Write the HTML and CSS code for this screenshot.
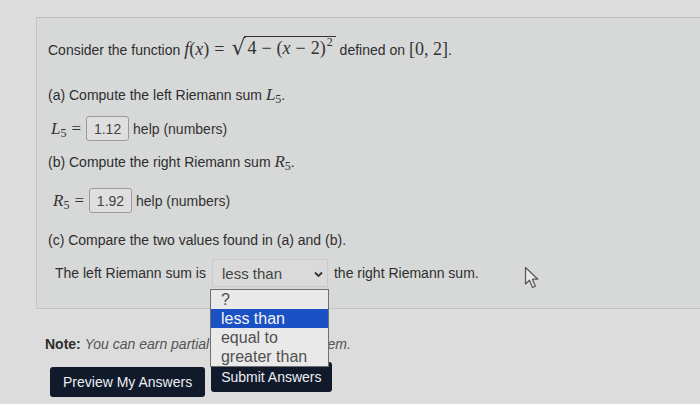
FILE: index.html
```html
<!DOCTYPE html>
<html>
<head>
<meta charset="utf-8">
<link rel="stylesheet" href="styles.css">
</head>
<body>
<div class="page">
  <div class="panel">
    <p class="row r1">Consider the function <span class="m big"><i>f</i>(<i>x</i>)<span class="op">=</span><span class="sqrt"><span class="rad">√</span><span class="under">4<span class="op">−</span>(<i>x</i><span class="op">−</span>2)<sup>2</sup></span></span></span> defined on <span class="m big">[0, 2]</span>.</p>
    <p class="row ra">(a) Compute the left Riemann sum <span class="m"><i>L</i><sub>5</sub></span>.</p>
    <div class="row ans a1"><span class="m"><i>L</i><sub>5</sub><span class="op">=</span></span><span class="box">1.12</span><span class="help">help (numbers)</span></div>
    <p class="row rb">(b) Compute the right Riemann sum <span class="m"><i>R</i><sub>5</sub></span>.</p>
    <div class="row ans a2"><span class="m"><i>R</i><sub>5</sub><span class="op">=</span></span><span class="box">1.92</span><span class="help">help (numbers)</span></div>
    <p class="row rc">(c) Compare the two values found in (a) and (b).</p>
    <div class="row cmp">
      <span>The left Riemann sum is</span>
      <div class="select">
        <span>less than</span>
        <svg class="chev" width="9" height="7" viewBox="0 0 9 7"><path d="M1 1.5 L4.5 5 L8 1.5" fill="none" stroke="#333" stroke-width="1.8"/></svg>
        <ul class="list">
          <li>?</li>
          <li class="sel">less than</li>
          <li>equal to</li>
          <li>greater than</li>
        </ul>
      </div>
      <span>the right Riemann sum.</span>
    </div>
  </div>
  <p class="note"><b>Note:</b> <i>You can earn partial credit on this problem.</i></p>
  <div class="buttons">
    <button class="btn">Preview My Answers</button>
    <button class="btn submit">Submit Answers</button>
  </div>
</div>
<svg class="cursor" width="16" height="24" viewBox="0 0 16 24"><path d="M1.5 1.5 L1.5 18 L5.5 14.2 L8.6 21.5 L11.4 20.3 L8.4 13.2 L13.8 13.2 Z" fill="#e8e8e8" stroke="#555" stroke-width="1.2" stroke-linejoin="round"/></svg>
</body>
</html>
```

FILE: styles.css
```css
html, body {
  margin: 0;
  padding: 0;
}
body {
  background: #dcdcdc;
  font-family: "Liberation Sans", Arial, sans-serif;
  font-size: 14px;
  color: #2e2e2e;
  width: 700px;
  height: 404px;
  overflow: hidden;
  position: relative;
}
.page {
  padding: 17px 0 0 36px;
}
.panel {
  background: #d7d8d8;
  border-top: 1px solid #bcbcbc;
  border-left: 1px solid #c6c6c6;
  border-bottom: 1px solid #c2c2c2;
  padding: 18px 0 20px 11px;
}
.row {
  margin: 0;
  display: flex;
  align-items: center;
  height: 24px;
  white-space: pre;
}
p.row {
  display: block;
  line-height: 24px;
}
.ra { margin-top: 23px; }
.a1 { margin-top: 9px; height: 25px; padding-left: 3px; }
.rb { margin-top: 9px; }
.a2 { margin-top: 14px; height: 25px; padding-left: 5px; }
.rc { margin-top: 15px; }
.cmp { margin-top: 6px; height: 30px; padding-left: 7px; }

.m {
  font-family: "Liberation Serif", "DejaVu Serif", serif;
  font-size: 17px;
  color: #333;
}
.m.big {
  font-size: 18px;
}
.op {
  margin: 0 5px;
}
.m sub {
  font-size: 12px;
  vertical-align: -3px;
  line-height: 0;
}
.m sup {
  font-size: 12px;
  vertical-align: 8px;
  line-height: 0;
  margin-left: 1px;
}
.sqrt {
  display: inline-flex;
  align-items: flex-end;
  margin-left: 2px;
}
.rad {
  font-size: 22px;
  line-height: 21px;
  font-family: "DejaVu Serif", serif;
  margin-right: -1px;
}
.under {
  border-top: 1px solid #333;
  padding: 2px 3px 0 3px;
  line-height: 19px;
}
.box {
  display: inline-flex;
  align-items: center;
  justify-content: center;
  width: 41px;
  height: 23px;
  border: 1px solid #9a9a9a;
  border-radius: 3px;
  background: #dfdfdf;
  margin-left: 0;
  margin-right: 4px;
  font-size: 14px;
  color: #444;
}
.help { color: #333; }

.select {
  position: relative;
  display: flex;
  align-items: center;
  width: 116px;
  height: 28px;
  border: 1px solid #cacaca;
  background: #dadada;
  margin: 0 6px 0 6px;
  padding-left: 9px;
  box-sizing: border-box;
  font-size: 15px;
  color: #444;
}
.chev {
  position: absolute;
  right: 4px;
  top: 11px;
}
.list {
  position: absolute;
  left: -3px;
  top: 29px;
  width: 119px;
  margin: 0;
  padding: 0;
  list-style: none;
  white-space: normal;
  background: #e9e9e9;
  border: 1px solid #707070;
  box-sizing: border-box;
  z-index: 5;
  font-size: 16px;
  color: #505050;
}
.list li {
  height: 19px;
  line-height: 19px;
  padding-left: 10px;
  white-space: nowrap;
}
.list li.sel {
  background: #1a52c6;
  color: #f4f4f4;
}

.note {
  margin: 26px 0 0 9px;
  line-height: 18px;
  font-size: 14px;
  color: #2c2c2c;
}
.note b { font-weight: bold; }
.note i { color: #555; }

.buttons {
  display: flex;
  align-items: flex-start;
  gap: 6px;
  margin: 14px 0 0 14px;
}
.btn {
  font-family: "Liberation Sans", Arial, sans-serif;
  font-size: 14px;
  color: #eceef2;
  background: #111a2b;
  border: none;
  border-radius: 3px;
  height: 30px;
  padding: 0 13px;
}
.btn.submit {
  margin-top: -5px;
  padding: 0 10px;
}
.cursor {
  position: absolute;
  left: 524px;
  top: 266px;
}
```
